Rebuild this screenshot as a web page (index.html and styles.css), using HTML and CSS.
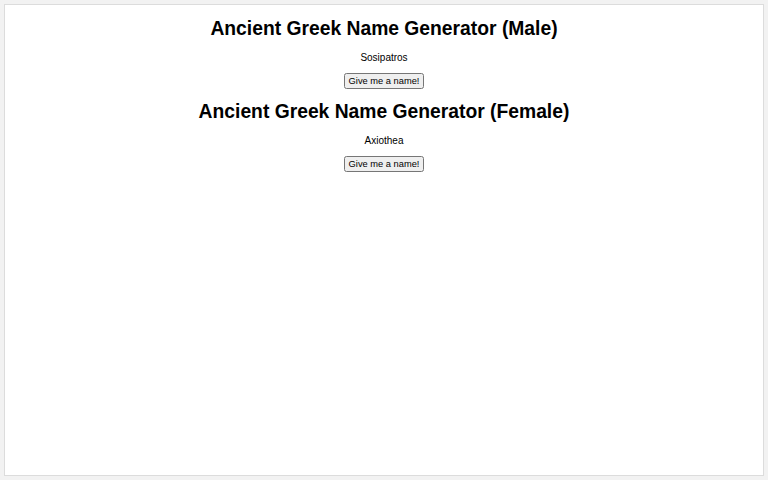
FILE: index.html
```html
<!DOCTYPE html>
<html lang="en">

<head>
    <meta charset="UTF-8">
    <meta name="viewport" content="width=device-width, initial-scale=1.0">
    <title>Ancient Greek Name Generator</title>
    <link rel="stylesheet" href="styles.css">
</head>

<body>
    <div class="container">
        <div class="generator">
            <h1>Ancient Greek Name Generator (Male)</h1>
            <p class="name" id="maleName">Sosipatros</p>
            <button type="button" onclick="newName('male')">Give me a name!</button>
        </div>

        <div class="generator">
            <h1>Ancient Greek Name Generator (Female)</h1>
            <p class="name" id="femaleName">Axiothea</p>
            <button type="button" onclick="newName('female')">Give me a name!</button>
        </div>
    </div>

    <script>
        const names = {
            male: ["Sosipatros", "Alkibiades", "Themistokles", "Demosthenes", "Nikias", "Kallias"],
            female: ["Axiothea", "Kleoboule", "Aspasia", "Theano", "Hipparchia", "Eurydike"]
        };

        function newName(kind) {
            let list = names[kind];
            let pick = list[Math.floor(Math.random() * list.length)];
            document.getElementById(kind + "Name").textContent = pick;
        }
    </script>
</body>

</html>
```

FILE: styles.css
```css
html {
    background-color: #f2f2f2;
}

body {
    margin: 0;
    padding: 4px 4px;
    font-family: "Liberation Sans", Arial, sans-serif;
}

.container {
    height: 469px;
    background-color: #fff;
    border: 1px solid #dcdcdc;
    text-align: center;
    padding-top: 1px;
}

h1 {
    font-size: 19.3px;
    margin: 12px 0 10px 0;
    color: #000;
}

.name {
    font-size: 10px;
    margin: 12px 0 7px 0;
}

button {
    font-family: "Liberation Sans", Arial, sans-serif;
    font-size: 9.3px;
    padding: 1px 3px;
}
```
